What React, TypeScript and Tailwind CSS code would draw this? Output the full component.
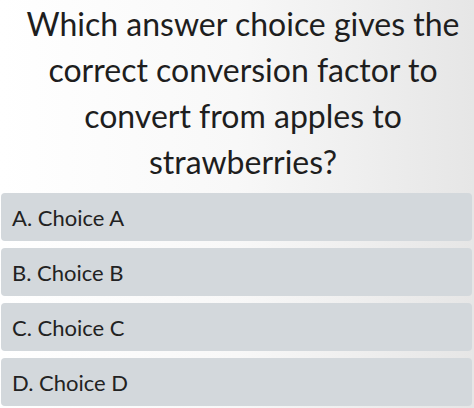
import React from 'react';

const choices = ['A. Choice A', 'B. Choice B', 'C. Choice C', 'D. Choice D'];

export default function App() {
  return (
    <div
      className="w-[474px] h-[408px] overflow-hidden bg-gradient-to-r from-white via-[#f8f8f8] to-[#e6e6e6]"
      style={{ fontFamily: 'Lato, "Open Sans", sans-serif' }}
    >
      <h1 className="pt-[1px] pl-[12px] text-center text-[32px] leading-[46px] font-normal text-[#1e1e1e]">
        Which answer choice gives the
        <br />
        correct conversion factor to
        <br />
        convert from apples to
        <br />
        strawberries?
      </h1>
      <div className="mt-[8px] flex flex-col gap-[7px] pl-[1px] pr-[2px]">
        {choices.map((c) => (
          <div
            key={c}
            className="h-[48px] flex items-center rounded-[4px] bg-[#d3d8dc] px-[11px] text-[22px] text-[#222]"
          >
            {c}
          </div>
        ))}
      </div>
    </div>
  );
}
